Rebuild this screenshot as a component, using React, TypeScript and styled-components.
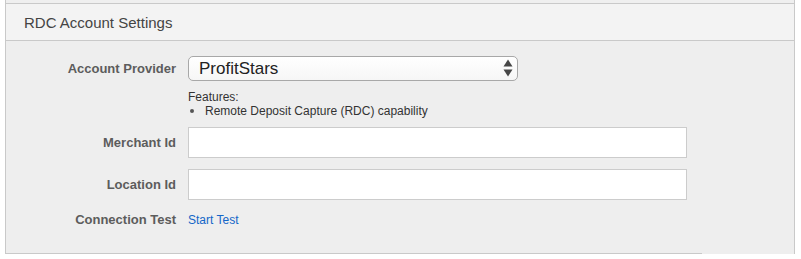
import React from 'react';
import styled, { createGlobalStyle } from 'styled-components';

const GlobalStyle = createGlobalStyle`
  html, body {
    margin: 0;
    padding: 0;
    background: #ffffff;
  }
  body {
    font-family: "Liberation Sans", Arial, Helvetica, sans-serif;
  }
`;

const Panel = styled.div`
  width: 788px;
  margin-left: 5px;
  border-left: 1px solid #c9c9c9;
  border-right: 1px solid #c9c9c9;
  background: #eeeeee;
`;

const PrevSection = styled.div`
  height: 3px;
  background: #efefef;
  border-bottom: 1px solid #c9c9c9;
`;

const Header = styled.div`
  height: 36px;
  display: flex;
  align-items: center;
  padding-left: 18px;
  background: #f3f3f3;
  border-bottom: 1px solid #c9c9c9;
  color: #444444;
  font-size: 15px;
`;

const Body = styled.div`
  padding: 15px 0 25px;
  display: flex;
  flex-direction: column;
`;

const Row = styled.div<{ $top?: number; $align?: string }>`
  display: grid;
  grid-template-columns: 170px 1fr;
  column-gap: 12px;
  align-items: ${(p) => p.$align || 'center'};
  margin-top: ${(p) => p.$top || 0}px;
`;

const Label = styled.label`
  text-align: right;
  font-size: 13px;
  font-weight: bold;
  color: #5c5c5c;
`;

const SelectWrap = styled.div`
  position: relative;
  width: 330px;
  height: 25px;
`;

const Select = styled.select`
  appearance: none;
  -webkit-appearance: none;
  width: 100%;
  height: 100%;
  box-sizing: border-box;
  margin: 0;
  padding: 0 0 0 10px;
  border: 1px solid #a8a8a8;
  border-radius: 5px;
  background: linear-gradient(#ffffff, #f6f6f6);
  font-family: "Liberation Sans", Arial, sans-serif;
  font-size: 17px;
  color: #222222;
  outline: none;
`;

const Arrows = styled.svg`
  position: absolute;
  right: 5px;
  top: 3px;
  pointer-events: none;
`;

const Features = styled.div`
  font-size: 12px;
  line-height: 14px;
  color: #333333;
`;

const FeatureList = styled.ul`
  margin: 0;
  padding: 0;
  list-style: none;
`;

const FeatureItem = styled.li`
  display: flex;
  align-items: center;
  &::before {
    content: '';
    width: 4px;
    height: 4px;
    border-radius: 50%;
    background: #555555;
    margin: 0 11px 0 2px;
  }
`;

const TextInput = styled.input`
  width: 499px;
  height: 31px;
  box-sizing: border-box;
  margin: 0;
  border: 1px solid #cccccc;
  background: #ffffff;
  outline: none;
  padding: 0 6px;
  font-size: 13px;
`;

const Link = styled.a`
  font-size: 12px;
  line-height: 16px;
  color: #1466c8;
  text-decoration: none;
  cursor: pointer;
`;

const BottomRule = styled.div`
  width: 697px;
  height: 1px;
  margin-left: -1px;
  background: #c9c9c9;
`;

export default function App() {
  return (
    <>
      <GlobalStyle />
      <Panel>
        <PrevSection />
        <Header>RDC Account Settings</Header>
        <Body>
          <Row>
            <Label>Account Provider</Label>
            <SelectWrap>
              <Select defaultValue="profitstars">
                <option value="profitstars">ProfitStars</option>
              </Select>
              <Arrows width="10" height="19" viewBox="0 0 10 19">
                <path d="M5 0.5 L9.5 7.5 L0.5 7.5 Z" fill="#474747" />
                <path d="M0.5 10.5 L9.5 10.5 L5 17.5 Z" fill="#474747" />
              </Arrows>
            </SelectWrap>
          </Row>
          <Row $top={9}>
            <span />
            <Features>
              Features:
              <FeatureList>
                <FeatureItem>Remote Deposit Capture (RDC) capability</FeatureItem>
              </FeatureList>
            </Features>
          </Row>
          <Row $top={9}>
            <Label>Merchant Id</Label>
            <TextInput type="text" />
          </Row>
          <Row $top={11}>
            <Label>Location Id</Label>
            <TextInput type="text" />
          </Row>
          <Row $top={10}>
            <Label>Connection Test</Label>
            <div>
              <Link>Start Test</Link>
            </div>
          </Row>
        </Body>
        <BottomRule />
      </Panel>
    </>
  );
}
